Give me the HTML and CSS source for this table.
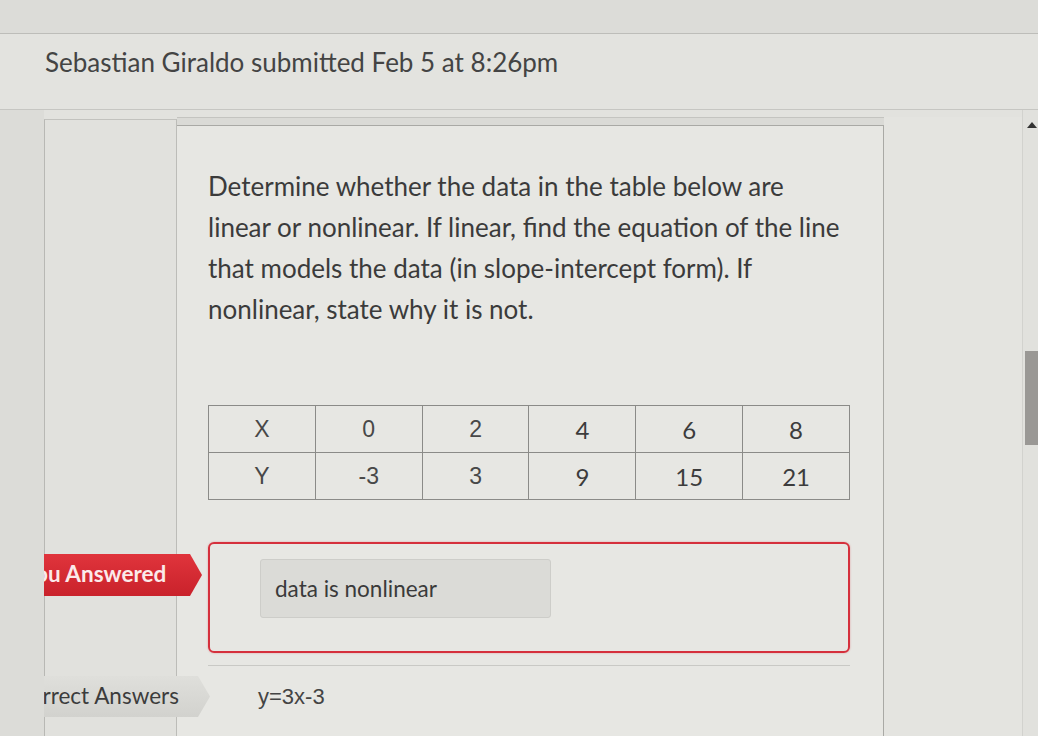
FILE: index.html
```html
<!DOCTYPE html>
<html lang="en">
<head>
<meta charset="utf-8">
<title>Submission</title>
<link rel="stylesheet" href="styles.css">
</head>
<body>
  <div class="topbar"></div>
  <header class="header">Sebastian Giraldo submitted Feb 5 at 8:26pm</header>
  <div class="page">
    <div class="gutter"></div>
    <div class="board">
      <aside class="leftcol"></aside>
      <section class="main">
        <div class="main-inner">
          <p class="question">Determine whether the data in the table below are linear or nonlinear. If linear, find the equation of the line that models the data (in slope-intercept form). If nonlinear, state why it is not.</p>
          <table class="data">
            <tr>
              <td class="arial">X</td><td class="arial">0</td><td class="arial">2</td><td>4</td><td>6</td><td>8</td>
            </tr>
            <tr>
              <td class="arial">Y</td><td class="arial">-3</td><td class="arial">3</td><td>9</td><td>15</td><td>21</td>
            </tr>
          </table>
          <div class="answer-row">
            <span class="tag tag-wrong">You Answered</span>
            <div class="answer-box">
              <div class="answer-text">data is nonlinear</div>
            </div>
          </div>
          <div class="correct-row">
            <span class="tag tag-correct">Correct Answers</span>
            <span class="correct-text">y=3x-3</span>
          </div>
        </div>
      </section>
      <div class="rightpad"></div>
    </div>
    <div class="scrollbar">
      <span class="scroll-arrow"></span>
      <span class="scroll-thumb"></span>
    </div>
  </div>
</body>
</html>
```
FILE: styles.css
```css
html, body {
  margin: 0;
  padding: 0;
}
body {
  width: 1038px;
  height: 736px;
  overflow: hidden;
  background: #e2e2de;
  font-family: Lato, "Noto Sans", sans-serif;
  color: #3a3a3a;
}
.topbar {
  height: 33px;
  background: #dcdcd8;
  border-bottom: 1px solid #bdbdb9;
}
.header {
  box-sizing: border-box;
  height: 76px;
  padding: 13px 0 0 45px;
  font-size: 26px;
  line-height: 30px;
  color: #444;
  background: #e3e3df;
  border-bottom: 1px solid #c6c6c2;
}
.page {
  display: flex;
  height: 626px;
}
.gutter {
  width: 44px;
  background: #dcdcd8;
}
.board {
  flex: 1;
  display: flex;
  overflow: hidden;
  padding-top: 7px;
}
.leftcol {
  width: 131px;
  margin-top: 2px;
  border-left: 1px solid #b8b8b4;
  border-right: 1px solid #bcbcb8;
  border-top: 1px solid #c2c2be;
  background: #e1e1dd;
}
.main {
  width: 707px;
  padding-top: 7px;
  border-top: 1px solid #c4c4c0;
  background: #dadad6;
}
.main-inner {
  height: 100%;
  box-sizing: border-box;
  padding: 40px 0 0 31px;
  background: #e7e7e3;
  border-top: 1px solid #a9a9a5;
  border-right: 1px solid #a9a9a5;
}
.question {
  width: 641px;
  margin: 0;
  font-size: 26px;
  line-height: 41px;
  color: #3b3b3b;
}
.data {
  width: 642px;
  margin-top: 75px;
  border-collapse: collapse;
  table-layout: fixed;
  font-size: 24px;
  color: #3c3c3c;
}
.data td {
  height: 46px;
  padding: 0;
  text-align: center;
  border: 1px solid #8b8b88;
}
.data td.arial {
  font-family: "Liberation Sans", Arial, sans-serif;
  font-size: 23px;
  color: #484848;
}
.answer-row {
  position: relative;
  margin-top: 42px;
}
.answer-box {
  box-sizing: border-box;
  width: 642px;
  height: 111px;
  padding: 15px 0 0 50px;
  border: 2px solid #d5303c;
  border-radius: 6px;
  box-shadow: 0 0 2px rgba(220, 40, 50, 0.4);
}
.answer-text {
  box-sizing: border-box;
  width: 291px;
  height: 59px;
  padding-left: 14px;
  font-size: 22.5px;
  line-height: 57px;
  color: #3a3a3a;
  background: #dbdbd7;
  border: 1px solid #cdcdc9;
  border-radius: 3px;
}
.tag {
  position: absolute;
  box-sizing: border-box;
  font-size: 22.5px;
  white-space: nowrap;
  clip-path: polygon(0 0, calc(100% - 12px) 0, 100% 50%, calc(100% - 12px) 100%, 0 100%);
}
.tag-wrong {
  left: -198px;
  top: 12px;
  width: 192px;
  height: 42px;
  padding-left: 13px;
  line-height: 40px;
  font-weight: 700;
  color: #fbeaea;
  background: linear-gradient(#e0343c, #c9222b);
}
.correct-row {
  position: relative;
  width: 642px;
  height: 70px;
  margin-top: 12px;
  padding-top: 10px;
  border-top: 1px solid #c9c9c5;
}
.tag-correct {
  left: -203px;
  top: 10px;
  width: 205px;
  height: 41px;
  padding-left: 10px;
  line-height: 40px;
  color: #3c3c3c;
  background: linear-gradient(#dfdfdb, #d2d2ce);
}
.correct-text {
  display: block;
  padding-left: 50px;
  font-family: "Liberation Sans", Arial, sans-serif;
  font-size: 22px;
  line-height: 41px;
  color: #444;
}
.rightpad {
  flex: 1;
  background: #e4e4e0;
}
.scrollbar {
  width: 15px;
  position: relative;
  background: #e1e1dd;
  border-left: 1px solid #d2d2ce;
}
.scroll-arrow {
  position: absolute;
  left: 4px;
  top: 12px;
  width: 0;
  height: 0;
  border-left: 5px solid transparent;
  border-right: 5px solid transparent;
  border-bottom: 6px solid #333;
}
.scroll-thumb {
  position: absolute;
  left: 2px;
  right: 0;
  top: 241px;
  height: 94px;
  background: #9a9895;
}
```
